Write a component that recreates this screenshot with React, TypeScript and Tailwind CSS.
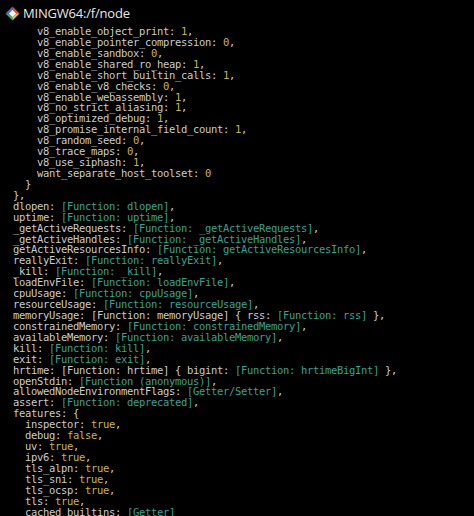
import type { ReactNode } from "react";

type Seg = { t: string; c?: "f" | "n" };
type Line = { indent: number; segs: Seg[] };

const p = (s: string): Seg => ({ t: s });
const f = (s: string): Seg => ({ t: s, c: "f" });
const n = (s: string): Seg => ({ t: s, c: "n" });

const v8 = (name: string, val: string, comma = true): Line => ({
  indent: 4,
  segs: [p(`${name}: `), n(val), p(comma ? "," : "")],
});

const fn = (key: string, label: string): Line => ({
  indent: 0,
  segs: [p(`${key}: `), f(label), p(",")],
});

const feat = (key: string, val: string): Line => ({
  indent: 2,
  segs: [p(`${key}: `), n(val), p(",")],
});

const lines: Line[] = [
  v8("v8_enable_object_print", "1"),
  v8("v8_enable_pointer_compression", "0"),
  v8("v8_enable_sandbox", "0"),
  v8("v8_enable_shared_ro_heap", "1"),
  v8("v8_enable_short_builtin_calls", "1"),
  v8("v8_enable_v8_checks", "0"),
  v8("v8_enable_webassembly", "1"),
  v8("v8_no_strict_aliasing", "1"),
  v8("v8_optimized_debug", "1"),
  v8("v8_promise_internal_field_count", "1"),
  v8("v8_random_seed", "0"),
  v8("v8_trace_maps", "0"),
  v8("v8_use_siphash", "1"),
  v8("want_separate_host_toolset", "0", false),
  { indent: 2, segs: [p("}")] },
  { indent: 0, segs: [p("},")] },
  fn("dlopen", "[Function: dlopen]"),
  fn("uptime", "[Function: uptime]"),
  fn("_getActiveRequests", "[Function: _getActiveRequests]"),
  fn("_getActiveHandles", "[Function: _getActiveHandles]"),
  fn("getActiveResourcesInfo", "[Function: getActiveResourcesInfo]"),
  fn("reallyExit", "[Function: reallyExit]"),
  fn("_kill", "[Function: _kill]"),
  fn("loadEnvFile", "[Function: loadEnvFile]"),
  fn("cpuUsage", "[Function: cpuUsage]"),
  fn("resourceUsage", "[Function: resourceUsage]"),
  {
    indent: 0,
    segs: [
      p("memoryUsage: [Function: memoryUsage] { rss: "),
      f("[Function: rss]"),
      p(" },"),
    ],
  },
  fn("constrainedMemory", "[Function: constrainedMemory]"),
  fn("availableMemory", "[Function: availableMemory]"),
  fn("kill", "[Function: kill]"),
  fn("exit", "[Function: exit]"),
  {
    indent: 0,
    segs: [
      p("hrtime: [Function: hrtime] { bigint: "),
      f("[Function: hrtimeBigInt]"),
      p(" },"),
    ],
  },
  fn("openStdin", "[Function (anonymous)]"),
  fn("allowedNodeEnvironmentFlags", "[Getter/Setter]"),
  fn("assert", "[Function: deprecated]"),
  { indent: 0, segs: [p("features: {")] },
  feat("inspector", "true"),
  feat("debug", "false"),
  feat("uv", "true"),
  feat("ipv6", "true"),
  feat("tls_alpn", "true"),
  feat("tls_sni", "true"),
  feat("tls_ocsp", "true"),
  feat("tls", "true"),
  { indent: 2, segs: [p("cached_builtins: "), f("[Getter]")] },
];

function GitIcon() {
  return (
    <svg width="15" height="15" viewBox="0 0 16 16" className="shrink-0">
      <path d="M8 0.5 L15.5 8 L12 8 L8 4 Z" fill="#e8503a" />
      <path d="M8 0.5 L8 4 L4 8 L0.5 8 Z" fill="#5c6bd8" />
      <path d="M0.5 8 L4 8 L8 12 L8 15.5 Z" fill="#3db06b" />
      <path d="M8 15.5 L8 12 L12 8 L15.5 8 Z" fill="#f0c23c" />
      <path d="M8 4 L12 8 L8 12 L4 8 Z" fill="#f2f2f2" />
    </svg>
  );
}

function Row({ line }: { line: Line }): ReactNode {
  return (
    <div className="whitespace-pre h-[10.93px]">
      {" ".repeat(line.indent)}
      {line.segs.map((s, i) => (
        <span
          key={i}
          className={
            s.c === "f"
              ? "text-[#36a293]"
              : s.c === "n"
                ? "text-[#c9b54a]"
                : undefined
          }
        >
          {s.t}
        </span>
      ))}
    </div>
  );
}

export default function App() {
  return (
    <div className="w-[474px] h-[516px] bg-black overflow-hidden">
      <div className="h-[26px] flex items-start gap-[3px] pl-[5px] pt-[6px]">
        <GitIcon />
        <span className="text-[13px] leading-[15px] text-[#e8e8e8] font-['Open_Sans',sans-serif] tracking-[-0.2px]">
          MINGW64:/f/node
        </span>
      </div>
      <div className="pl-[13px] font-['DejaVu_Sans_Mono',monospace] text-[10.5px] tracking-[-0.32px] leading-[10.93px] text-[#cbcbcb]">
        {lines.map((l, i) => (
          <Row key={i} line={l} />
        ))}
      </div>
    </div>
  );
}
